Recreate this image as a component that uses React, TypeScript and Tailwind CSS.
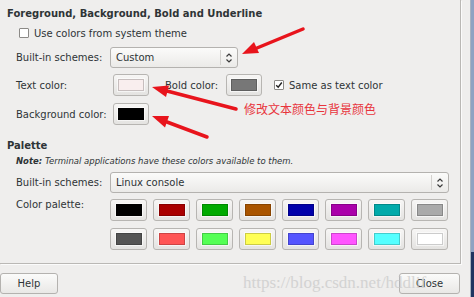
import React from "react";

const row1 = ["#000000", "#aa0000", "#00aa00", "#aa5500", "#0000aa", "#aa00aa", "#00aaaa", "#aaaaaa"];
const row2 = ["#555555", "#ff5555", "#55ff55", "#ffff55", "#5555ff", "#ff55ff", "#55ffff", "#ffffff"];

const SpinArrows = () => (
  <svg width="8" height="12" viewBox="0 0 8 12" fill="none" stroke="#3a3a3a" strokeWidth="1.2">
    <path d="M1.5 4.5 L4 2 L6.5 4.5" />
    <path d="M1.5 7.5 L4 10 L6.5 7.5" />
  </svg>
);

const Combo: React.FC<{ value: string; width: string }> = ({ value, width }) => (
  <div
    className={`${width} h-[21px] flex items-center border border-[#b4b2af] rounded-[3px] bg-gradient-to-b from-[#fbfbfa] to-[#ebeae8]`}
  >
    <span className="flex-1 pl-[5px] text-[10px] text-[#2e3436]">{value}</span>
    <div className="h-[15px] border-l border-[#d3d1ce] w-[17px] flex items-center justify-center">
      <SpinArrows />
    </div>
  </div>
);

const ColorButton: React.FC<{ color: string; w?: string }> = ({ color, w = "w-[36px]" }) => (
  <div
    className={`${w} h-[22px] flex items-center justify-center border border-[#b7b5b2] rounded-[3px] bg-gradient-to-b from-[#f7f6f5] to-[#e4e3e1]`}
  >
    <div
      className="w-[26px] h-[12px] border border-[#00000033] shadow-[0_0_0_1px_rgba(255,255,255,0.6)]"
      style={{ backgroundColor: color }}
    />
  </div>
);

const CheckBox: React.FC<{ checked?: boolean }> = ({ checked }) => (
  <div className="w-[10px] h-[10px] border border-[#8c8a87] rounded-[1px] bg-white flex items-center justify-center">
    {checked && (
      <svg width="8" height="8" viewBox="0 0 8 8" fill="none" stroke="#222" strokeWidth="1.4">
        <path d="M1.2 4.2 L3.2 6.2 L6.8 1.5" />
      </svg>
    )}
  </div>
);

const Button: React.FC<{ label: string; w: string }> = ({ label, w }) => (
  <div
    className={`${w} h-[21px] flex items-center justify-center border border-[#b4b2af] rounded-[3px] bg-gradient-to-b from-[#fbfbfa] to-[#e9e8e6] text-[10px] text-[#2e3436]`}
  >
    {label}
  </div>
);

export default function App() {
  return (
    <div
      className="relative w-[474px] h-[297px] overflow-hidden bg-[#efeeed] text-[#2e3436] flex"
      style={{ fontFamily: '"DejaVu Sans", "Noto Sans CJK SC", sans-serif' }}
    >
      <div className="w-[470px] flex flex-col">
        {/* tab frame */}
        <div className="w-[461px] h-[264px] border-r border-b border-[#bab8b5] shadow-[1px_1px_0_#fbfbfb] flex flex-col">
          <div className="pl-[7px] pt-[7px] h-[21px] text-[10px] font-bold leading-[14px]">
            Foreground, Background, Bold and Underline
          </div>
          <div className="mt-[5px] pl-[19px] h-[14px] flex items-center gap-[5px] text-[10px]">
            <CheckBox />
            <span>Use colors from system theme</span>
          </div>
          <div className="mt-[7px] pl-[16px] flex items-center text-[10px]">
            <span className="w-[94px]">Built-in schemes:</span>
            <Combo value="Custom" width="w-[128px]" />
          </div>
          <div className="mt-[6px] pl-[16px] flex items-center text-[10px]">
            <span className="w-[97px]">Text color:</span>
            <ColorButton color="#f9eeee" />
            <span className="ml-[16px] w-[61px]">Bold color:</span>
            <ColorButton color="#777777" />
            <div className="ml-[12px] flex items-center gap-[5px]">
              <CheckBox checked />
              <span>Same as text color</span>
            </div>
          </div>
          <div className="mt-[7px] pl-[16px] flex items-center text-[10px]">
            <span className="w-[97px]">Background color:</span>
            <ColorButton color="#000000" />
          </div>
          <div className="mt-[14px] pl-[7px] h-[14px] leading-[14px] text-[10px] font-bold">Palette</div>
          <div className="mt-[2px] pl-[16px] h-[12px] leading-[12px] text-[8.5px] italic">
            <span className="font-bold">Note:</span> Terminal applications have these colors available to them.
          </div>
          <div className="mt-[5px] pl-[16px] flex items-center text-[10px]">
            <span className="w-[94px]">Built-in schemes:</span>
            <Combo value="Linux console" width="w-[339px]" />
          </div>
          <div className="mt-[6px] pl-[16px] flex text-[10px]">
            <span className="w-[94px] leading-[12px]">Color palette:</span>
            <div className="grid grid-cols-8 gap-x-[6px] gap-y-[7px]">
              {[...row1, ...row2].map((c, i) => (
                <ColorButton key={i} color={c} w="w-[37px]" />
              ))}
            </div>
          </div>
        </div>
        {/* bottom buttons */}
        <div className="mt-[9px] flex justify-between w-[460px]">
          <Button label="Help" w="w-[58px]" />
          <Button label="Close" w="w-[61px]" />
        </div>
      </div>
      {/* window edge */}
      <div className="w-[4px] flex flex-col border-l border-[#a9b3c0]">
        <div className="flex-1 bg-[#8ea2c2]" />
        <div className="h-[45px] bg-[#1f3461]" />
      </div>

      {/* annotation overlay */}
      <svg className="absolute inset-0 pointer-events-none" width="474" height="297" viewBox="0 0 474 297">
        <g stroke="#e8141c" strokeWidth="3.5" strokeLinecap="round" fill="#e8141c">
          <line x1="303" y1="29" x2="257" y2="48" />
          <line x1="236" y1="109" x2="167" y2="91" />
          <line x1="207" y1="137" x2="167" y2="122" />
        </g>
        <g fill="#e8141c">
          <polygon points="242,54 259,53 254,42" />
          <polygon points="152,87 169,85.5 166,97" />
          <polygon points="152,116 169,116 165,127.5" />
        </g>
      </svg>
      <div className="absolute left-[244px] top-[102px] text-[12px] leading-[16px] text-[#e8343c]">
        修改文本颜色与背景颜色
      </div>
      <div
        className="absolute left-[243px] top-[273px] text-[17px] leading-[20px] text-[#c8c8c8] opacity-70 pointer-events-none"
        style={{ fontFamily: '"Liberation Serif", serif' }}
      >
        https://blog.csdn.net/hddlif
      </div>
    </div>
  );
}
